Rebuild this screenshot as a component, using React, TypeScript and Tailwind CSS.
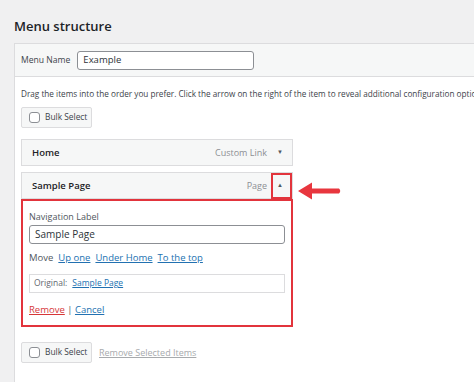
import React from "react";

function Checkbox() {
  return <span className="h-[11px] w-[11px] shrink-0 rounded-[3px] border border-[#8c8f94] bg-white" />;
}

function BulkSelect() {
  return (
    <button className="flex h-[21px] w-[71px] items-center gap-[5px] whitespace-nowrap rounded-[2px] border border-[#dcdcde] bg-[#f6f7f7] pl-[7px] text-[8.4px] text-[#3c434a]">
      <Checkbox />
      Bulk Select
    </button>
  );
}

function MenuItem({ title, type, open }: { title: string; type: string; open?: boolean }) {
  return (
    <div className="relative flex h-[27px] w-[272px] items-center border border-[#dcdcde] bg-[#f6f7f7] pl-[10px] pr-[8px]">
      <span className="flex-1 text-[9.5px] font-semibold text-[#1d2327]">{title}</span>
      <span className="text-[9px] text-[#8c8f94]">{type}</span>
      <span className="ml-[9px] flex w-[8px] justify-center text-[6px] text-[#50575e]">{open ? "▲" : "▼"}</span>
      {open && (
        <span className="absolute right-[0px] top-[0px] h-[26px] w-[21px] border-2 border-[#e2343c]" />
      )}
    </div>
  );
}

export default function App() {
  return (
    <div
      className="relative h-[382px] w-[474px] overflow-hidden bg-[#f0f0f1]"
      style={{ fontFamily: '"Open Sans", "Noto Sans", sans-serif' }}
    >
      <h2 className="h-[43px] pl-[14px] pt-[17px] text-[13px] font-semibold text-[#1d2327]">Menu structure</h2>
      <div className="ml-[14px] w-[480px] border border-[#dcdcde] bg-white">
        <div className="flex h-[33px] items-center gap-[7px] border-b border-[#dcdcde] bg-[#f6f7f7] px-[6px]">
          <span className="text-[8.6px] text-[#3c434a]">Menu Name</span>
          <div className="flex h-[19px] w-[177px] items-center rounded-[3px] border border-[#8c8f94] bg-white px-[5px] text-[9.5px] text-[#2c3338]">
            Example
          </div>
        </div>
        <div className="flex flex-col px-[6px] pt-[11px] pb-[20px]">
          <p className="w-[453px] overflow-hidden whitespace-nowrap text-[8.2px] text-[#3c434a]">
            Drag the items into the order you prefer. Click the arrow on the right of the item to reveal additional configuration options.
          </p>
          <div className="mt-[7px]">
            <BulkSelect />
          </div>
          <div className="mt-[11px] flex flex-col gap-[6px]">
            <MenuItem title="Home" type="Custom Link" />
            <div className="flex flex-col">
              <MenuItem title="Sample Page" type="Page" open />
              <div className="flex w-[272px] flex-col border-2 border-[#e2343c] px-[6px] pt-[9px] pb-[8px]">
                <span className="text-[9px] text-[#50575e]">Navigation Label</span>
                <div className="mt-[1px] flex h-[19px] items-center rounded-[3px] border border-[#8c8f94] bg-white px-[5px] text-[10px] text-[#2c3338]">
                  Sample Page
                </div>
                <div className="mt-[7px] flex gap-[5px] text-[9.5px] text-[#50575e]">
                  <span>Move</span>
                  <a className="text-[#2271b1] underline">Up one</a>
                  <a className="text-[#2271b1] underline">Under Home</a>
                  <a className="text-[#2271b1] underline">To the top</a>
                </div>
                <div className="mt-[9px] flex h-[19px] items-center gap-[5px] border border-[#dcdcde] px-[4px] text-[8.5px] text-[#646970]">
                  <span>Original:</span>
                  <a className="text-[#2271b1] underline">Sample Page</a>
                </div>
                <div className="mt-[10px] text-[9.5px] text-[#50575e]">
                  <a className="text-[#d63638] underline">Remove</a> | <a className="text-[#2271b1] underline">Cancel</a>
                </div>
              </div>
            </div>
          </div>
          <div className="mt-[15px] flex items-center gap-[7px]">
            <BulkSelect />
            <a className="text-[9px] text-[#a7aaad] underline">Remove Selected Items</a>
          </div>
        </div>
      </div>
      <svg className="absolute left-[297px] top-[181px]" width="46" height="20" viewBox="0 0 46 20">
        <path d="M1 10 L15 1.5 L15 7.5 L42 7.5 Q44.5 10 42 12.5 L15 12.5 L15 18.5 Z" fill="#e8363e" />
      </svg>
    </div>
  );
}
